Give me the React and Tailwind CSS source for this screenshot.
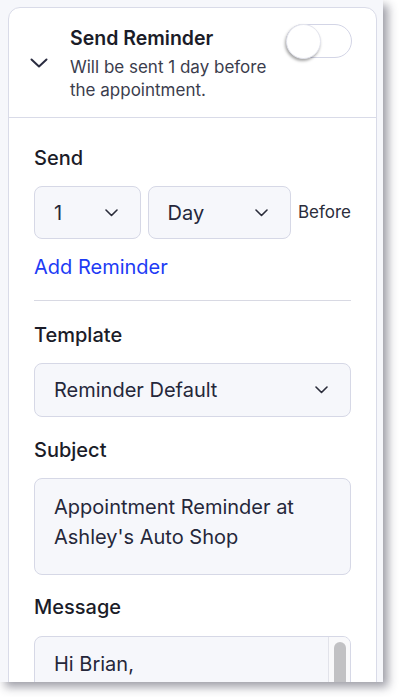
import React from 'react';

const Chevron = ({ className = '' }) => (
    <svg width="13" height="8" viewBox="0 0 13 8" fill="none" className={className}>
        <polyline points="1,1 6.5,6.5 12,1" stroke="#2b2d3b" strokeWidth="1.6" strokeLinecap="round" strokeLinejoin="round" />
    </svg>
);

const Label = ({ children, className = '' }) => (
    <div className={`text-[20px] leading-[24px] font-medium text-[#1b1c28] ${className}`}>{children}</div>
);

const SelectBox = ({ value, className = '' }) => (
    <div className={`flex items-center justify-between h-[53px] pl-[19px] pr-[22px] rounded-lg border border-[#d6d8e6] bg-[#f6f7fb] text-[20px] text-[#25273a] ${className}`}>
        <span>{value}</span>
        <Chevron />
    </div>
);

const App = () => {
    return (
        <div className="w-[400px] h-[697px] bg-white" style={{ fontFamily: 'Inter, "Noto Sans", sans-serif' }}>
            <div className="w-[383px] h-[682px] bg-[#f6f7fb] pl-[8px] pt-[7px] overflow-hidden shadow-[5px_5px_9px_rgba(40,40,60,0.45)]">
                <div className="w-[369px] min-h-[700px] bg-white border border-[#d9dbe8] rounded-t-xl">
                    {/* header */}
                    <div className="flex h-[110px] pl-[21px] pr-[24px] border-b border-[#d9dbe8]">
                        <div className="w-[40px] flex items-center pt-[1px]">
                            <svg width="18" height="10" viewBox="0 0 18 10" fill="none">
                                <polyline points="1.5,1.5 9,8.5 16.5,1.5" stroke="#2a2c40" strokeWidth="2" strokeLinecap="round" strokeLinejoin="round" />
                            </svg>
                        </div>
                        <div className="flex-1 pt-[17px]">
                            <div className="text-[19.5px] leading-[26px] font-semibold text-[#1b1c28]">Send Reminder</div>
                            <div className="mt-[5px] text-[17px] leading-[23px] text-[#3b3d4d]">
                                Will be sent 1 day before<br />the appointment.
                            </div>
                        </div>
                        <div className="pt-[16px]">
                            <div className="relative w-[66px] h-[34px] rounded-full border border-[#d3d5e6] bg-white">
                                <div className="absolute left-[-1px] top-[-1px] w-[35px] h-[35px] rounded-full bg-white border border-[#e4e5ee] shadow-[-1px_2px_3px_rgba(0,0,0,0.35)]" />
                            </div>
                        </div>
                    </div>

                    {/* body */}
                    <div className="pl-[25px] pr-[25px] pt-[28px]">
                        <Label>Send</Label>
                        <div className="flex items-center gap-[7px] mt-[16px]">
                            <SelectBox value="1" className="w-[107px]" />
                            <SelectBox value="Day" className="w-[144px]" />
                            <span className="text-[17px] text-[#2b2d3b]">Before</span>
                        </div>
                        <div className="mt-[16px] text-[20px] leading-[24px] text-[#1d3bf5]">Add Reminder</div>
                        <div className="mt-[21px] h-px bg-[#d8d9e3]" />

                        <Label className="mt-[22px]">Template</Label>
                        <SelectBox value="Reminder Default" className="mt-[16px] h-[54px]" />

                        <Label className="mt-[21px]">Subject</Label>
                        <div className="mt-[16px] h-[97px] rounded-lg border border-[#d6d8e6] bg-[#f6f7fb] pl-[19px] pr-[20px] pt-[13px] text-[20px] leading-[30px] text-[#25273a]">
                            Appointment Reminder at<br />Ashley's Auto Shop
                        </div>

                        <Label className="mt-[20px]">Message</Label>
                        <div className="relative mt-[17px] h-[120px] rounded-lg border border-[#d6d8e6] bg-[#f6f7fb] pl-[19px] pt-[12px] text-[20px] leading-[30px] text-[#25273a] overflow-hidden">
                            Hi Brian,
                            <div className="absolute right-0 top-0 bottom-0 w-[22px] bg-[#f9f9fb] border-l border-[#e2e3ea]">
                                <div className="mx-auto mt-[5px] w-[12px] h-[80px] rounded-full bg-[#c1c1c4]" />
                            </div>
                        </div>
                    </div>
                </div>
            </div>
        </div>
    );
};

export default App;
